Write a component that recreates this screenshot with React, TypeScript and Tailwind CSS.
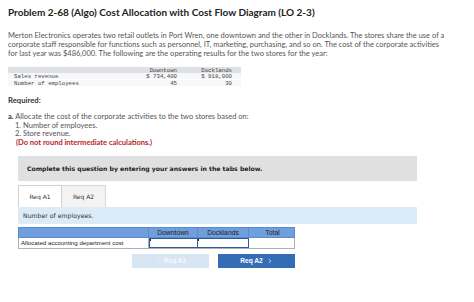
import { ChevronLeft, ChevronRight } from 'lucide-react';

const rows = [
  { label: 'Sales revenue', downtown: '$ 734,400', docklands: '$ 918,000' },
  { label: 'Number of employees', downtown: '45', docklands: '30' },
];

export default function App() {
  // fuentes base
  const sans = "font-['Lato','Open_Sans',sans-serif]";
  const mono = "font-['Liberation_Mono',monospace]";
  const verdana = "font-['DejaVu_Sans','Verdana',sans-serif]";
  const arial = "font-['Liberation_Sans','Arial',sans-serif]";

  return (
    <div className="w-[474px] h-[302px] bg-white overflow-hidden">
      <div className="pl-[8px] pt-[6px]">
        {/* Titulo */}
        <h1 className={`${sans} text-[10px] leading-[12px] font-bold text-[#222]`}>
          Problem 2-68 (Algo) Cost Allocation with Cost Flow Diagram (LO 2-3)
        </h1>

        {/* Enunciado */}
        <p className={`${sans} mt-[13px] text-[7.5px] leading-[9px] text-[#555]`}>
          Merton Electronics operates two retail outlets in Port Wren, one downtown and the other in Docklands. The stores share the use of a
          <br />
          corporate staff responsible for functions such as personnel, IT, marketing, purchasing, and so on. The cost of the corporate activities
          <br />
          for last year was $486,000. The following are the operating results for the two stores for the year:
        </p>

        {/* Tabla de datos */}
        <div className={`${mono} mt-[9px] w-[233px] text-[5.7px] leading-[7px] text-[#444]`}>
          <div className="grid grid-cols-[132px_31px_55px] pl-[6px] bg-[#dde0e5] h-[6px] items-end">
            <span />
            <span className="text-right">Downtown</span>
            <span className="text-right">Docklands</span>
          </div>
          {rows.map((r) => (
            <div key={r.label} className="grid grid-cols-[132px_31px_55px] pl-[6px] bg-[#f7f7f7] border-b border-white h-[7px] items-center">
              <span>{r.label}</span>
              <span className="text-right">{r.downtown}</span>
              <span className="text-right">{r.docklands}</span>
            </div>
          ))}
        </div>

        {/* Requerido */}
        <p className={`${sans} mt-[9px] text-[7.7px] leading-[8px] font-bold text-[#333]`}>Required:</p>
        <div className={`${sans} mt-[9px] text-[7.5px] leading-[8.5px] text-[#555]`}>
          <p>
            <span className="font-bold text-[#333]">a.</span> Allocate the cost of the corporate activities to the two stores based on:
          </p>
          <p className="pl-[7px]">1. Number of employees.</p>
          <p className="pl-[7px]">2. Store revenue.</p>
          <p className="pl-[8px] font-bold text-[#b3262a]">(Do not round intermediate calculations.)</p>
        </div>
      </div>

      {/* Bloque de respuesta */}
      <div className="ml-[18px] mt-[9px] w-[399px]">
        <div className={`${verdana} h-[25px] bg-[#e0e0e0] flex items-center pl-[9px] text-[6.15px] font-bold text-[#222]`}>
          Complete this question by entering your answers in the tabs below.
        </div>

        {/* Tabs */}
        <div className={`${verdana} mt-[4px] flex text-[6px] text-[#333]`}>
          <div className="w-[44px] h-[22px] bg-white border border-b-0 border-[#d0d0d0] flex items-center justify-center">
            Req A1
          </div>
          <div className="w-[44px] h-[22px] bg-[#f3f3f3] border border-l-0 border-b-0 border-[#d8d8d8] flex items-center justify-center">
            Req A2
          </div>
        </div>

        <div className={`${verdana} h-[17px] bg-[#dcebf8] flex items-center pl-[5px] text-[6.2px] text-[#333]`}>
          Number of employees.
        </div>

        {/* Tabla de respuesta */}
        <div className={`${arial} mt-[3px] w-[277px] text-[6.15px] text-[#222]`}>
          <div className="grid grid-cols-[130px_49px_51px_47px] h-[11px] bg-[#6f9fdc] border border-[#5a8ccc] text-[6.8px]">
            <span className="border-r border-[#5a8ccc]" />
            <span className="border-r border-[#5a8ccc] flex items-center justify-center">Downtown</span>
            <span className="border-r border-[#5a8ccc] flex items-center justify-center">Docklands</span>
            <span className="flex items-center justify-center">Total</span>
          </div>
          <div className="grid grid-cols-[130px_49px_51px_47px] h-[11px] border border-t-0 border-[#b0b0b0]">
            <span className="flex items-center pl-[2px] border-r border-[#b0b0b0]">Allocated accounting department cost</span>
            <span className="relative border border-[#2d5aa3]">
              <span className="absolute left-0 top-0 w-[1px] h-[2px] bg-[#222]" />
            </span>
            <span className="relative border border-l-0 border-[#2d5aa3]">
              <span className="absolute left-0 top-0 w-[1px] h-[2px] bg-[#222]" />
            </span>
            <span />
          </div>
        </div>

        {/* Botones */}
        <div className={`${arial} mt-[5px] w-[277px] flex justify-end gap-[9px] text-[6.6px] font-bold text-white`}>
          <button className="w-[77px] h-[14px] bg-[#d8e5f3] flex items-center justify-center gap-[3px] text-[#f4f8fc]">
            <ChevronLeft className="w-[6px] h-[6px]" strokeWidth={3} />
            Req A1
          </button>
          <button className="w-[77px] h-[14px] bg-[#336db6] flex items-center justify-center gap-[4px]">
            Req A2
            <ChevronRight className="w-[6px] h-[6px]" strokeWidth={3} />
          </button>
        </div>
      </div>
    </div>
  );
}
